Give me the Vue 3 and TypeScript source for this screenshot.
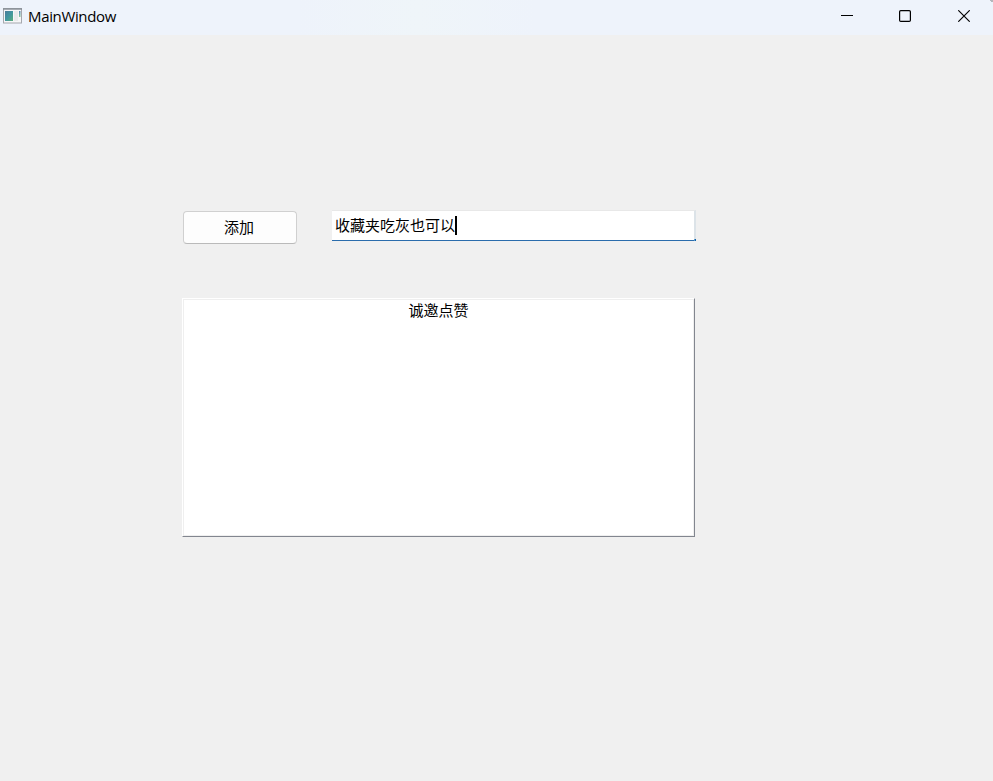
<script setup lang="ts">
import { ref } from 'vue'

const title = 'MainWindow'
const draft = ref('收藏夹吃灰也可以')
const items = ref<string[]>(['诚邀点赞'])

function addItem(): void {
  if (draft.value) items.value.push(draft.value)
}
</script>

<template>
  <div class="window">
    <header class="titlebar">
      <svg class="app-icon" width="20" height="16" viewBox="0 0 20 16">
        <defs>
          <linearGradient id="pane" x1="0" y1="0" x2="1" y2="1">
            <stop offset="0" stop-color="#4a7b9b" />
            <stop offset="0.5" stop-color="#4296a0" />
            <stop offset="1" stop-color="#5aad7a" />
          </linearGradient>
          <linearGradient id="strip" x1="0" y1="0" x2="0" y2="1">
            <stop offset="0" stop-color="#5685b5" />
            <stop offset="1" stop-color="#8acb9c" />
          </linearGradient>
        </defs>
        <rect x="0.5" y="0.5" width="18" height="14.5" fill="#f6f6f7" stroke="#a5a8ad" />
        <path d="M0 1H19" stroke="#858b94" stroke-width="1.4" />
        <rect x="2" y="3" width="8" height="10" fill="url(#pane)" />
        <rect x="11" y="3" width="4" height="10" fill="#e9eaeb" />
        <rect x="16" y="3" width="1.5" height="6" fill="url(#strip)" />
      </svg>
      <span class="title">{{ title }}</span>
      <div class="controls">
        <svg width="12" height="12" viewBox="0 0 12 12"><path d="M0 5.5H12" stroke="#000" /></svg>
        <svg width="12" height="12" viewBox="0 0 12 12">
          <rect x="0.6" y="0.6" width="10.8" height="10.8" rx="1.2" fill="none" stroke="#000" stroke-width="1.2" />
        </svg>
        <svg width="12" height="12" viewBox="0 0 12 12">
          <path d="M0.3 0.3L11.7 11.7M11.7 0.3L0.3 11.7" stroke="#000" stroke-width="1.15" />
        </svg>
      </div>
      <i class="corner"></i>
    </header>
    <main class="content">
      <div class="row">
        <button class="add" @click="addItem">添加</button>
        <div class="field"><span>{{ draft }}</span><i class="caret"></i></div>
      </div>
      <div class="list">
        <div class="list-inner">
          <div v-for="item in items" :key="item" class="item">{{ item }}</div>
        </div>
      </div>
    </main>
  </div>
</template>

<style>
body {
  margin: 0;
  background: #f0f0f0;
}
</style>

<style scoped>
.window {
  width: 100%;
  height: 781px;
  background: #f0f0f0;
  color: #000;
  font-family: "Noto Sans CJK SC", sans-serif;
  font-size: 15px;
  overflow: hidden;
}
.titlebar {
  position: relative;
  display: flex;
  align-items: center;
  box-sizing: border-box;
  height: 35px;
  padding: 0 23px 3px 3px;
  background: linear-gradient(90deg, #eef3fb, #eef3fb 30%, #eff5f9 42%, #eef3fb 54%);
}
.corner {
  position: absolute;
  top: 0;
  right: 0;
  width: 3px;
  height: 3px;
  background: linear-gradient(45deg, transparent 50%, #b4b7bb 50%);
}
.app-icon {
  display: block;
}
.title {
  margin-left: 5px;
  font-family: "Open Sans", "Noto Sans", sans-serif;
  font-size: 15px;
  letter-spacing: -0.35px;
  line-height: 20px;
}
.controls {
  display: flex;
  gap: 47px;
  margin-left: auto;
}
.controls svg {
  display: block;
}
.controls svg:first-child {
  margin-right: -1px;
}
.content {
  padding: 175px 0 0 182px;
}
.row {
  display: flex;
  align-items: flex-start;
  height: 88px;
}
.add {
  box-sizing: border-box;
  width: 114px;
  height: 33px;
  margin: 1px 35px 0 1px;
  padding: 0 2px 2px 0;
  border: 1px solid #d0d0d0;
  border-bottom-color: #bababa;
  border-radius: 4px;
  background: #fdfdfd;
  color: #000;
  font: inherit;
  line-height: 29px;
}
.field {
  position: relative;
  display: flex;
  align-items: center;
  box-sizing: border-box;
  width: 364px;
  height: 31px;
  padding-left: 3px;
  border-top: 1px solid #e8e8e8;
  border-right: 2px solid #dce3e8;
  border-bottom: 1px solid #2a6cac;
  background: #fff;
}
.field::after {
  content: "";
  position: absolute;
  right: -2px;
  bottom: -1px;
  width: 2px;
  height: 2px;
  background: linear-gradient(90deg, #5b9ccc 50%, #0f5fa8 50%);
}
.field span {
  padding-bottom: 2px;
  line-height: 27px;
}
.caret {
  width: 2px;
  height: 19px;
  background: #000;
}
.list {
  box-sizing: border-box;
  width: 513px;
  height: 239px;
  border: 1px solid #fff;
  border-right-color: #82868f;
  border-bottom-color: #82868f;
}
.list-inner {
  box-sizing: border-box;
  height: 100%;
  border: 1px solid #efefef;
  background: #fff;
}
.item {
  height: 20px;
  line-height: 20px;
  text-align: center;
}
</style>
